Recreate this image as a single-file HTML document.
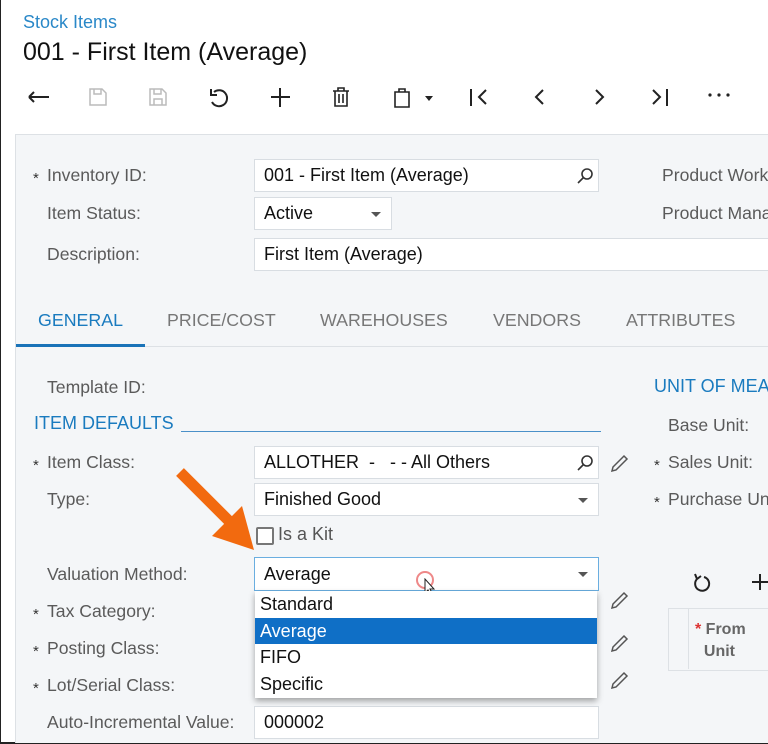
<!DOCTYPE html>
<html><head><style>
html,body{margin:0;width:768px;height:744px;overflow:hidden}
body{background:#fff;font-family:"Liberation Sans",Arial,sans-serif;position:relative}
#w{position:absolute;left:0;top:0;width:768px;height:744px;overflow:hidden}
.a{position:absolute;white-space:nowrap}
.lbl{position:absolute;font-size:17.6px;color:#5a5a5a;white-space:nowrap}
.box{position:absolute;background:#fff;border:1px solid #d8dde2;box-sizing:border-box;font-size:18px;color:#111;padding-left:9px;display:flex;align-items:center;white-space:nowrap;overflow:hidden}
.star{position:absolute;font-size:15px;color:#333}
.tab{position:absolute;top:310px;font-size:17.8px;color:#777;white-space:nowrap}
.caret{position:absolute;width:0;height:0;border-left:5px solid transparent;border-right:5px solid transparent;border-top:5px solid #555}
.ic{position:absolute}
</style></head><body><div id="w">
<div class="a" style="left:0;top:0;width:1px;height:744px;background:#222"></div>
<div class="a" style="left:0;top:742px;width:768px;height:2px;background:#222"></div>
<div class="a" style="left:23px;top:12px;font-size:18px;color:#2a88c8">Stock Items</div>
<div class="a" style="left:23px;top:38px;font-size:25px;color:#111">001 - First Item (Average)</div>
<svg class="ic" style="left:0;top:80px" width="768" height="34" fill="none" stroke="#222" stroke-width="2">
<path d="M29 17h20M29 17l5-5M29 17l5 5"/>
<g stroke="#bbb" stroke-width="1.5"><path d="M90 9h12l4 4v12h-16z M94 9v5h7v-5"/><path d="M150 9h12l4 4v12h-16z M154 9v5h7v-5 M154 25v-6h8v6"/></g>
<path d="M214 12a8 8 0 1 1-2 10" /><path d="M211 9v6h6"/>
<path d="M280 8v19M271 17h19"/>
<path d="M333 11h16M338 11v-3h6v3M335 11v15h12v-15M339 14v9M343 14v9" stroke-width="1.6"/>
<path d="M395 12h14v15h-14zM399 12v-3h6v3" stroke-width="1.6"/>
<path d="M425 16l8 0-4 5z" fill="#222" stroke="none"/>
<path d="M471 9v17M486 10l-7 7 7 7"/>
<path d="M543 10l-7 7 7 7"/>
<path d="M596 10l7 7-7 7"/>
<path d="M653 10l7 7-7 7M667 9v17"/>
<g fill="#222" stroke="none"><circle cx="710" cy="15" r="1.6"/><circle cx="719" cy="15" r="1.6"/><circle cx="728" cy="15" r="1.6"/></g>
</svg>
<div class="a" style="left:15px;top:134px;width:753px;height:608px;background:#f4f6f8;border-top:1px solid #dde1e5;border-left:1px solid #dde1e5"></div>

<div class="star" style="left:33px;top:170px">*</div><div class="lbl" style="left:47px;top:165px">Inventory ID:</div>
<div class="box" style="left:254px;top:159px;width:345px;height:33px">001 - First Item (Average)</div>
<svg class="ic" style="left:576px;top:167px" width="18" height="18" fill="none" stroke="#333" stroke-width="1.6"><circle cx="11" cy="7" r="5"/><path d="M7 11l-5 5"/></svg>
<div class="lbl" style="left:662px;top:165px">Product Workgroup</div>
<div class="lbl" style="left:47px;top:203px">Item Status:</div>
<div class="box" style="left:254px;top:197px;width:138px;height:33px">Active</div>
<div class="caret" style="left:371px;top:212px"></div>
<div class="lbl" style="left:662px;top:203px">Product Manager</div>
<div class="lbl" style="left:47px;top:244px">Description:</div>
<div class="box" style="left:254px;top:238px;width:520px;height:33px">First Item (Average)</div>

<div class="tab" style="left:38px;color:#1a7bbf">GENERAL</div>
<div class="tab" style="left:167px">PRICE/COST</div>
<div class="tab" style="left:320px">WAREHOUSES</div>
<div class="tab" style="left:493px">VENDORS</div>
<div class="tab" style="left:626px">ATTRIBUTES</div>
<div class="a" style="left:16px;top:346px;width:752px;height:1px;background:#dde1e5"></div>
<div class="a" style="left:16px;top:344px;width:129px;height:3px;background:#1a73b8"></div>

<div class="lbl" style="left:47px;top:377px">Template ID:</div>
<div class="a" style="left:34px;top:413px;font-size:18px;color:#1a7bbf">ITEM DEFAULTS</div>
<div class="a" style="left:181px;top:431px;width:420px;height:1px;background:#4a90c8"></div>
<div class="a" style="left:654px;top:376px;font-size:18px;color:#1a7bbf">UNIT OF MEASURE</div>
<div class="lbl" style="left:668px;top:415px">Base Unit:</div>
<div class="star" style="left:654px;top:457px">*</div><div class="lbl" style="left:668px;top:452px">Sales Unit:</div>
<div class="star" style="left:654px;top:494px">*</div><div class="lbl" style="left:668px;top:489px">Purchase Unit:</div>

<div class="star" style="left:33px;top:457px">*</div><div class="lbl" style="left:47px;top:452px">Item Class:</div>
<div class="box" style="left:254px;top:446px;width:345px;height:33px">ALLOTHER&nbsp; - &nbsp; - - All Others</div>
<svg class="ic" style="left:576px;top:454px" width="18" height="18" fill="none" stroke="#333" stroke-width="1.6"><circle cx="11" cy="7" r="5"/><path d="M7 11l-5 5"/></svg>
<div class="lbl" style="left:47px;top:489px">Type:</div>
<div class="box" style="left:254px;top:483px;width:345px;height:33px">Finished Good</div>
<div class="caret" style="left:578px;top:498px"></div>
<div class="a" style="left:256px;top:527px;width:14px;height:14px;border:2px solid #777;border-radius:2px;background:#fff"></div>
<div class="a" style="left:278px;top:524px;font-size:18px;color:#555">Is a Kit</div>
<div class="lbl" style="left:47px;top:564px">Valuation Method:</div>
<div class="box" style="left:254px;top:557px;width:345px;height:34px;border:1px solid #6aaee0">Average</div>
<div class="caret" style="left:578px;top:572px"></div>
<div class="a" style="left:416px;top:571px;width:18px;height:18px;border:2px solid #e88;border-radius:50%;box-sizing:border-box"></div>
<svg class="ic" style="left:424px;top:578px" width="14" height="20"><path d="M1 1v14l3-3 3 6 2-1-3-6h4z" fill="#fff" stroke="#222"/></svg>
<div class="star" style="left:33px;top:606px">*</div><div class="lbl" style="left:47px;top:601px">Tax Category:</div>
<div class="star" style="left:33px;top:643px">*</div><div class="lbl" style="left:47px;top:638px">Posting Class:</div>
<div class="star" style="left:33px;top:680px">*</div><div class="lbl" style="left:47px;top:675px">Lot/Serial Class:</div>
<div class="lbl" style="left:47px;top:712px">Auto-Incremental Value:</div>
<div class="box" style="left:254px;top:706px;width:345px;height:33px">000002</div>
<svg class="ic" style="left:610px;top:450px" width="20" height="250" fill="none" stroke="#555" stroke-width="1.5">
<path d="M3 17l11-11 3 3-11 11-4 1z"/><path d="M3 167l11-11 3 3-11 11-4 1z" transform="translate(0,-13)"/><path d="M3 17l11-11 3 3-11 11-4 1z" transform="translate(0,180)"/><path d="M3 17l11-11 3 3-11 11-4 1z" transform="translate(0,217)"/></svg>

<div class="a" style="left:255px;top:591px;width:342px;height:107px;background:#fff;box-shadow:0 3px 6px rgba(0,0,0,.35);font-size:18px;color:#111">
<div style="height:27px;line-height:27px;padding-left:5px">Standard</div>
<div style="height:26px;line-height:26px;padding-left:5px;background:#0f6fc6;color:#fff">Average</div>
<div style="height:27px;line-height:27px;padding-left:5px">FIFO</div>
<div style="height:27px;line-height:27px;padding-left:5px">Specific</div>
</div>

<svg class="ic" style="left:686px;top:570px" width="82" height="26" fill="none" stroke="#222" stroke-width="2"><path d="M18 7a7 7 0 1 1-7 2M9 4l2 5 4-3"/><path d="M66 12h16M74 4v16"/></svg>
<div class="a" style="left:668px;top:608px;width:100px;height:61px;border:1px solid #dde1e5;border-right:none;background:#f4f6f8"></div>
<div class="a" style="left:688px;top:608px;width:1px;height:61px;background:#dde1e5"></div>
<div class="a" style="left:695px;top:619px;font-size:16px;font-weight:bold;color:#666;line-height:22px"><span style="color:#d33">*</span> From<br>&nbsp;&nbsp;Unit</div>

<svg class="ic" style="left:170px;top:464px" width="100" height="95"><path d="M10 8L64 62" stroke="#f26a0f" stroke-width="11"/><path d="M84 86L42 72 72 42z" fill="#f26a0f"/></svg>
</div></body></html>
